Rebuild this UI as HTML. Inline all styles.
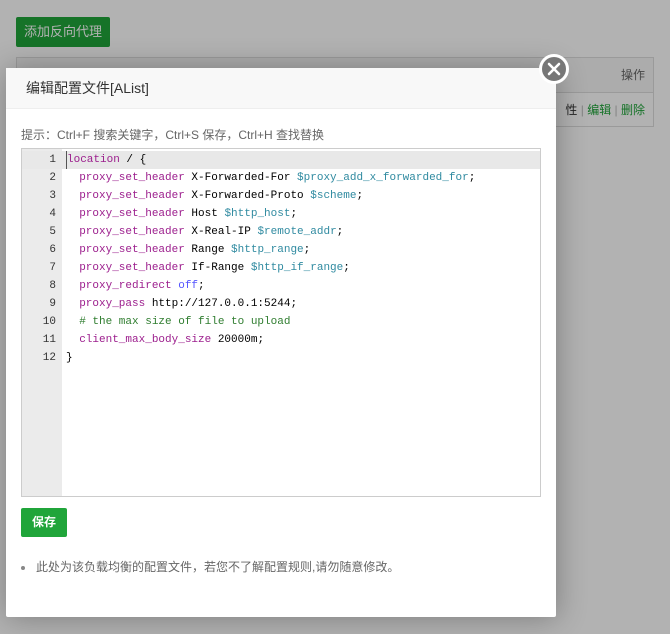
<!DOCTYPE html>
<html><head><meta charset="utf-8"><style>
*{margin:0;padding:0;box-sizing:border-box}
body{width:670px;height:634px;overflow:hidden;position:relative;background:#fff;font-family:"Liberation Sans","Noto Sans CJK SC",sans-serif;font-size:12px}
.addbtn{position:absolute;left:16px;top:17px;width:94px;height:30px;background:#20a53a;color:#fff;border-radius:2px;font-size:13px;line-height:30px;text-align:center}
.tbl{position:absolute;left:16px;top:57px;width:638px;height:70px;border:1px solid #ddd}
.tbl .h{height:35px;border-bottom:1px solid #ddd;background:#f6f6f6;text-align:right;padding-right:8px;line-height:35px;color:#666}
.tbl .r{text-align:right;padding-right:8px;line-height:34px;color:#20a53a}
.overlay{position:absolute;left:0;top:0;width:670px;height:634px;background:rgba(0,0,0,0.3)}
.modal{position:absolute;left:6px;top:68px;width:550px;height:549px;background:#fff;border-radius:2px;box-shadow:1px 1px 30px rgba(0,0,0,.3)}
.mh{height:41px;background:#f8f8f8;border-bottom:1px solid #eee;padding-left:20px;line-height:41px;font-size:14px;color:#333}
.close{position:absolute;left:539px;top:54px;width:30px;height:30px;border-radius:50%;background:#777;border:3px solid #fff;z-index:5}
.tip{position:absolute;left:15px;top:58px;color:#666;font-size:12px}
.ed{position:absolute;left:15px;top:80px;width:520px;height:349px;border:1px solid #ccc;overflow:hidden}
.gut{position:absolute;left:0;top:0;width:40px;height:100%;background:#ebebeb}
.code{position:absolute;left:0;top:2px;width:100%;font-family:"Liberation Mono",monospace;font-size:11px}
.ln{height:18px;line-height:18px;white-space:pre;position:relative}
.ln .n{display:inline-block;width:34px;text-align:right;color:#333}
.ln .t{position:absolute;left:44px;top:0;color:#000}
.ln.act{background:#e8e8e8}
.k{color:#a626a4;color:#990073;color:#9c1e8d}
.v{color:#2f8aa0}
.o{color:#5555ff}
.c{color:#2f7d2f}
.save{position:absolute;left:15px;top:440px;width:46px;height:29px;background:#20a53a;color:#fff;border-radius:2px;text-align:center;line-height:29px;font-weight:bold;font-size:12px}
.note{position:absolute;left:15px;top:490px;color:#666;font-size:12px}
.note:before{content:"";display:inline-block;width:4px;height:4px;border-radius:50%;background:#888;margin-right:11px;vertical-align:middle}
</style></head><body>
<div class="addbtn">添加反向代理</div>
<div class="tbl"><div class="h">操作</div><div class="r"><span style="color:#333">性</span> <span style="color:#bbb">|</span> 编辑 <span style="color:#bbb">|</span> 删除</div></div>
<div class="overlay"></div>
<div class="close"><svg width="24" height="24" viewBox="0 0 24 24" style="position:absolute;left:0;top:0"><path d="M7 7L17 17M17 7L7 17" stroke="#fff" stroke-width="2.6" stroke-linecap="round"/></svg></div>
<div class="modal">
<div class="mh">编辑配置文件[AList]</div>
<div class="tip">提示：Ctrl+F 搜索关键字，Ctrl+S 保存，Ctrl+H 查找替换</div>
<div class="ed"><div class="gut"></div><div class="code">
<div class="ln act"><span class="n">1</span><span class="t" style="border-left:1px solid #555"><span class="k">location</span> / {</span></div>
<div class="ln"><span class="n">2</span><span class="t">  <span class="k">proxy_set_header</span> X-Forwarded-For <span class="v">$proxy_add_x_forwarded_for</span>;</span></div>
<div class="ln"><span class="n">3</span><span class="t">  <span class="k">proxy_set_header</span> X-Forwarded-Proto <span class="v">$scheme</span>;</span></div>
<div class="ln"><span class="n">4</span><span class="t">  <span class="k">proxy_set_header</span> Host <span class="v">$http_host</span>;</span></div>
<div class="ln"><span class="n">5</span><span class="t">  <span class="k">proxy_set_header</span> X-Real-IP <span class="v">$remote_addr</span>;</span></div>
<div class="ln"><span class="n">6</span><span class="t">  <span class="k">proxy_set_header</span> Range <span class="v">$http_range</span>;</span></div>
<div class="ln"><span class="n">7</span><span class="t">  <span class="k">proxy_set_header</span> If-Range <span class="v">$http_if_range</span>;</span></div>
<div class="ln"><span class="n">8</span><span class="t">  <span class="k">proxy_redirect</span> <span class="o">off</span>;</span></div>
<div class="ln"><span class="n">9</span><span class="t">  <span class="k">proxy_pass</span> http://127.0.0.1:5244;</span></div>
<div class="ln"><span class="n">10</span><span class="t">  <span class="c"># the max size of file to upload</span></span></div>
<div class="ln"><span class="n">11</span><span class="t">  <span class="k">client_max_body_size</span> 20000m;</span></div>
<div class="ln"><span class="n">12</span><span class="t">}</span></div>
</div></div>
<div class="save">保存</div>
<div class="note">此处为该负载均衡的配置文件，若您不了解配置规则,请勿随意修改。</div>
</div>
</body></html>
